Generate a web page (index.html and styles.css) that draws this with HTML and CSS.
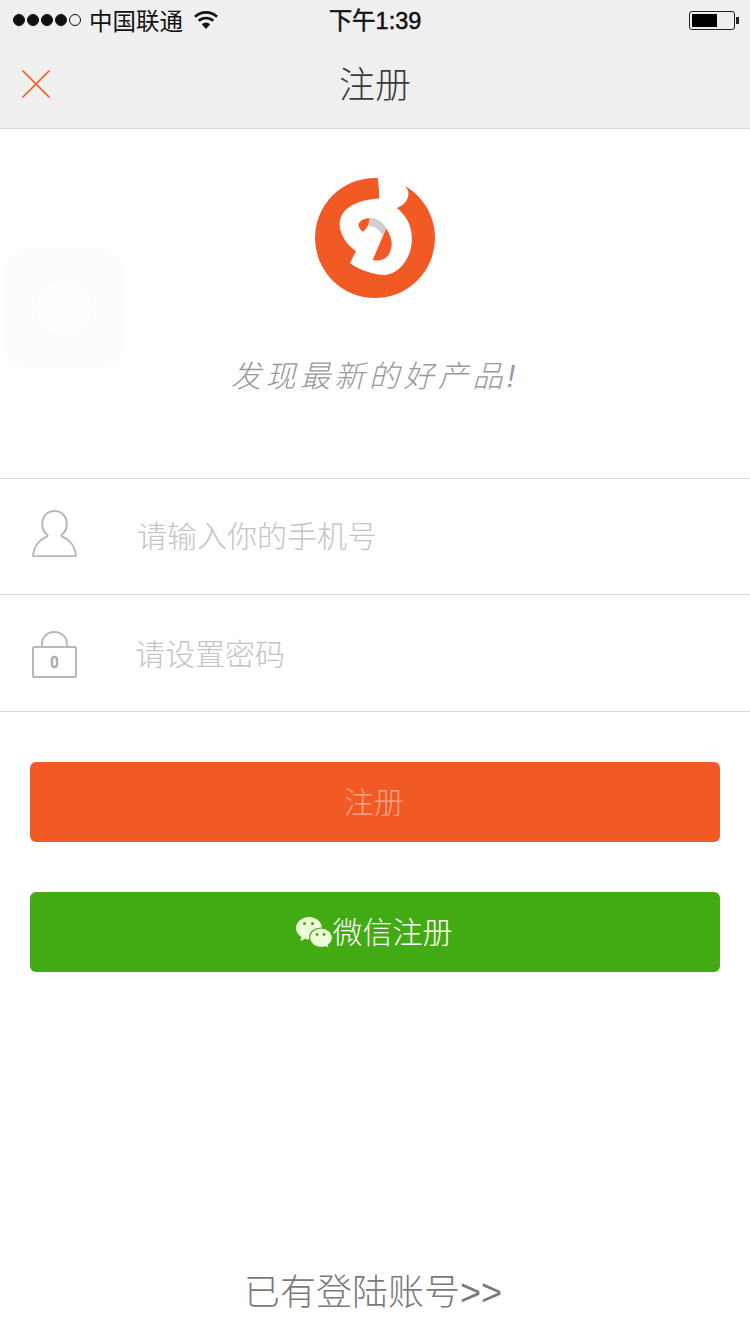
FILE: index.html
```html
<!DOCTYPE html>
<html lang="zh-CN">
<head>
  <meta charset="UTF-8" />
  <meta name="viewport" content="width=device-width, initial-scale=1.0"/>
  <title>注册</title>
  <link rel="stylesheet" href="styles.css">
</head>
<body>
  <div class="page">
    <header class="top">
      <div class="status">
        <div class="status-left">
          <span class="dots"><i></i><i></i><i></i><i></i><i class="off"></i></span>
          <span class="carrier">中国联通</span>
          <svg class="wifi" width="26" height="20" viewBox="0 0 26 20">
            <path d="M13 19 L8.8 14.2 A6.2 6.2 0 0 1 17.2 14.2 Z" fill="#111"/>
            <path d="M5.7 10.8 A10.8 10.8 0 0 1 20.3 10.8" fill="none" stroke="#111" stroke-width="2.6"/>
            <path d="M2 6.8 A16 16 0 0 1 24 6.8" fill="none" stroke="#111" stroke-width="2.6"/>
          </svg>
        </div>
        <div class="clock">下午1:39</div>
        <div class="status-right">
          <div class="battery"><span class="battery-level"></span></div>
        </div>
      </div>
      <nav class="nav">
        <svg class="close" width="28" height="28" viewBox="0 0 28 28">
          <path d="M0.5 0.5 L27.5 27.5 M27.5 0.5 L0.5 27.5" stroke="#f4602a" stroke-width="1.6" fill="none"/>
        </svg>
        <h1 class="title">注册</h1>
      </nav>
    </header>

    <section class="hero">
      <div class="ghost"><span></span></div>
      <svg class="logo" width="120" height="120" viewBox="0 0 120 120">
        <circle cx="60" cy="60" r="60" fill="#f15a24"/>
        <path fill="#fff" d="M62.7 -1 C63.5 6 64.5 14 64 20.5 C55 21 42 23 33 30 C25 36 23 46 26 54 C29 63 36 70 41 73 L35 85.3 C45 92 58 97 70 97 C82 96 93 84 96 70 C98.5 55 96 42 82 30 C90 27 95 20 93 13 C92 10 90 8 89 7 L80 -1 Z"/>
        <path fill="#f15a24" d="M43.3 47 C45 42 50 40 55 40.3 L53.3 47 C52 50 50 52 48.3 53.7 C46 53 44 50 43.3 47 Z"/>
        <path fill="#f15a24" d="M71 50 C75 56 77 62 76.7 67 C76 75 72 81 66 82 C63 83 60 82.5 57.7 82 L68.3 57 Z"/>
        <path fill="#cfcfcf" d="M55 40 C62 39.5 67.5 44 71.5 50 L68 58 C65 52 60 48 53 48 Z"/>
      </svg>
      <p class="slogan">发现最新的好产品!</p>
    </section>

    <form class="fields">
      <label class="field">
        <svg class="field-icon person" width="45" height="47" viewBox="0 0 45 47">
          <path d="M15 24.5 C10 21 9.5 14 11 9 C13 4 17.5 1 22.5 1 C27.5 1 32 4 34 9 C35.5 14 35 21 30 24.5 C29 25.5 29.5 26.5 31 27 C38 30 43 37 44 45 C44 46 43.5 46.3 43 46.3 L2 46.3 C1.5 46.3 1 46 1 45 C2 37 7 30 14 27 C15.5 26.5 16 25.5 15 24.5 Z" fill="none" stroke="#b8b8b8" stroke-width="2"/>
        </svg>
        <input class="field-input phone" type="text" placeholder="请输入你的手机号">
      </label>
      <label class="field field-tall">
        <svg class="field-icon lock" width="45" height="47" viewBox="0 0 45 47">
          <path d="M10 16 L10 13 C10 6 15.5 1 22.5 1 C29.5 1 35 6 35 13 L35 16" fill="none" stroke="#b8b8b8" stroke-width="2"/>
          <rect x="1" y="16" width="43" height="30" rx="1.5" fill="none" stroke="#b8b8b8" stroke-width="2"/>
          <rect x="20" y="26" width="5" height="10" rx="2.5" fill="none" stroke="#b0b0b0" stroke-width="2.4"/>
        </svg>
        <input class="field-input password" type="password" placeholder="请设置密码">
      </label>
    </form>

    <div class="actions">
      <button class="btn btn-orange" type="button"><span>注册</span></button>
      <button class="btn btn-green" type="button">
        <svg class="wechat" width="37" height="33" viewBox="0 0 37 33">
          <path fill="#eefcd8" d="M13 1 C20.2 1 26 6 26 12.2 C26 18.4 20.2 23.4 13 23.4 C11.6 23.4 10.3 23.2 9 22.8 L4.6 25.2 L5.4 21 C2.2 19 0 15.8 0 12.2 C0 6 5.8 1 13 1 Z"/>
          <path fill="#eefcd8" stroke="#42ab13" stroke-width="1.2" d="M25 12 C31 12 36.4 16.2 36.4 21.8 C36.4 24.8 34.8 27.4 32.4 29 L33.4 32.8 L29.2 30.7 C27.9 31.2 26.5 31.4 25 31.4 C18.8 31.4 13.6 27.2 13.6 21.8 C13.6 16.2 18.8 12 25 12 Z"/>
          <circle cx="8.5" cy="7.5" r="1.6" fill="#42ab13"/>
          <circle cx="16.5" cy="7.5" r="1.6" fill="#42ab13"/>
          <circle cx="21" cy="18.5" r="1.4" fill="#42ab13"/>
          <circle cx="28" cy="18.5" r="1.4" fill="#42ab13"/>
        </svg>
        <span>微信注册</span>
      </button>
    </div>

    <footer class="login">已有登陆账号&gt;&gt;</footer>
  </div>
</body>
</html>
```

FILE: styles.css
```css
body {
  margin: 0;
  background-color: #fff;
  font-family: "Liberation Sans", "Noto Sans CJK SC", sans-serif;
  font-weight: 300;
}

.page {
  display: flex;
  flex-direction: column;
  height: 1334px;
  overflow: hidden;
}

.top {
  background-color: #efefef;
  border-bottom: 1px solid #d6d6d6;
}

.status {
  display: grid;
  grid-template-columns: 1fr auto 1fr;
  align-items: center;
  height: 40px;
  padding: 0 11px 0 13px;
  color: #111;
}

.status-left {
  display: flex;
  align-items: center;
}

.status-right {
  display: flex;
  justify-content: flex-end;
  padding-right: 4px;
}

.dots {
  display: flex;
  gap: 2px;
  margin-right: 8px;
}

.dots i {
  box-sizing: border-box;
  width: 12px;
  height: 12px;
  border: 1px solid #111;
  border-radius: 50%;
  background-color: #111;
}

.dots i.off {
  background-color: transparent;
}

.carrier {
  font-size: 23.5px;
  font-weight: 400;
  margin-right: 10px;
}

.wifi {
  margin-top: -1px;
}

.clock {
  font-size: 23.5px;
  font-weight: 400;
  -webkit-text-stroke: 0.5px #111;
  margin: -2px 2px 0 0;
}

.battery {
  position: relative;
  box-sizing: border-box;
  width: 46px;
  height: 19px;
  border: 1px solid #222;
  border-radius: 3px;
  padding: 2px;
  margin-top: 1px;
}

.battery::after {
  content: "";
  position: absolute;
  right: -5px;
  top: 5px;
  width: 3px;
  height: 7px;
  background-color: #222;
}

.battery-level {
  display: block;
  width: 25px;
  height: 100%;
  background-color: #000;
}

.nav {
  position: relative;
  display: flex;
  align-items: center;
  justify-content: center;
  height: 88px;
}

.close {
  position: absolute;
  left: 22px;
  top: 30px;
}

.title {
  margin: 0 0 5px 0;
  font-size: 36px;
  font-weight: 300;
  color: #3a3a3a;
}

.hero {
  position: relative;
  display: flex;
  flex-direction: column;
  align-items: center;
  height: 349px;
  box-sizing: border-box;
  padding-top: 49px;
}

.ghost {
  position: absolute;
  left: 4px;
  top: 119px;
  display: flex;
  align-items: center;
  justify-content: center;
  width: 120px;
  height: 120px;
  border-radius: 26px;
  background-color: #fcfcfc;
}

.ghost span {
  width: 56px;
  height: 56px;
  border-radius: 50%;
  background-color: #fefefe;
}

.slogan {
  margin: 55px 0 0 0;
  font-size: 30.5px;
  line-height: 46px;
  letter-spacing: 4px;
  font-style: italic;
  color: #999;
}

.fields {
  border-top: 1px solid #d8d8d8;
}

.field {
  display: flex;
  align-items: center;
  gap: 58px;
  height: 115px;
  padding-left: 32px;
  border-bottom: 1px solid #d8d8d8;
}

.field-tall {
  height: 116px;
}

.field-icon {
  flex: none;
}

.person {
  margin-bottom: 6px;
}

.lock {
  margin-top: 3px;
}

.field-input {
  flex: 1;
  min-width: 0;
  border: 0;
  padding: 0;
  outline: none;
  background: transparent;
  font-family: inherit;
  font-weight: 300;
  font-size: 30px;
  color: #333;
}

.field-input.phone {
  margin-left: 2px;
}

.field-input.password {
  margin-top: 3px;
}

.field-input::placeholder {
  color: #c4c4c8;
  opacity: 1;
}

.actions {
  display: flex;
  flex-direction: column;
  gap: 50px;
  padding: 50px 30px 0 30px;
}

.btn {
  display: flex;
  align-items: center;
  justify-content: center;
  height: 80px;
  border: 0;
  border-radius: 6px;
  padding: 0 2px 0 0;
  font-family: inherit;
  font-weight: 300;
  font-size: 30px;
}

.btn span {
  margin-top: -4px;
}

.btn-orange {
  background-color: #f15a24;
  color: rgba(255, 255, 255, 0.45);
}

.btn-green {
  background-color: #42ab13;
  color: #fff;
}

.login {
  margin-top: auto;
  padding: 0 4px 15px 0;
  text-align: center;
  font-size: 36px;
  line-height: 52px;
  color: #7a7a7a;
}
```
